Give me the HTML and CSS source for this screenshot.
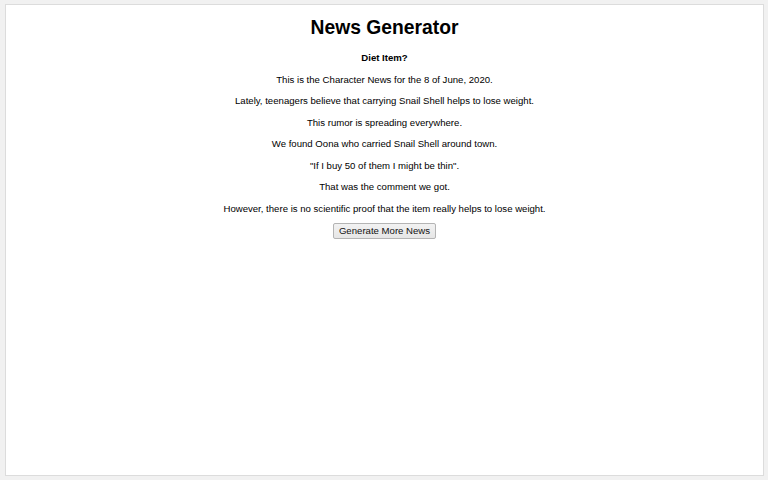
FILE: index.html
```html
<!DOCTYPE html>
<html>
<head>
<meta charset="utf-8">
<title>News Generator</title>
<link rel="stylesheet" href="styles.css">
</head>
<body>
<main class="card">
  <h1 class="title">News Generator</h1>
  <h2 class="headline">Diet Item?</h2>
  <p class="line">This is the Character News for the 8 of June, 2020.</p>
  <p class="line">Lately, teenagers believe that carrying Snail Shell helps to lose weight.</p>
  <p class="line">This rumor is spreading everywhere.</p>
  <p class="line">We found Oona who carried Snail Shell around town.</p>
  <p class="line">"If I buy 50 of them I might be thin".</p>
  <p class="line">That was the comment we got.</p>
  <p class="line">However, there is no scientific proof that the item really helps to lose weight.</p>
  <button class="more" type="button">Generate More News</button>
</main>
</body>
</html>
```
FILE: styles.css
```css
html, body {
  margin: 0;
  height: 100%;
}
body {
  background: #f1f1f1;
  font-family: "Liberation Sans", Arial, sans-serif;
  color: #000;
  padding: 4px 4px 4px 5px;
  box-sizing: border-box;
}
.card {
  background: #fff;
  border: 1px solid #dcdcdc;
  height: 100%;
  box-sizing: border-box;
  display: flex;
  flex-direction: column;
  align-items: center;
  text-align: center;
  padding-top: 12px;
}
.title {
  font-size: 19.3px;
  line-height: 22px;
  font-weight: bold;
  margin: 0 0 12.5px;
}
.headline {
  font-size: 9.6px;
  line-height: 11px;
  font-weight: bold;
  margin: 0 0 11px;
}
.line {
  font-size: 9.6px;
  line-height: 11px;
  margin: 0 0 10.6px;
}
.line:last-of-type {
  margin-bottom: 8.5px;
}
.more {
  font-family: "Liberation Sans", Arial, sans-serif;
  font-size: 9.6px;
  line-height: 11px;
  height: 16px;
  padding: 0 5px;
  background: linear-gradient(#f2f2f2, #e6e6e6);
  border: 1px solid #b4b4b4;
  border-radius: 2px;
  color: #111;
}
```
